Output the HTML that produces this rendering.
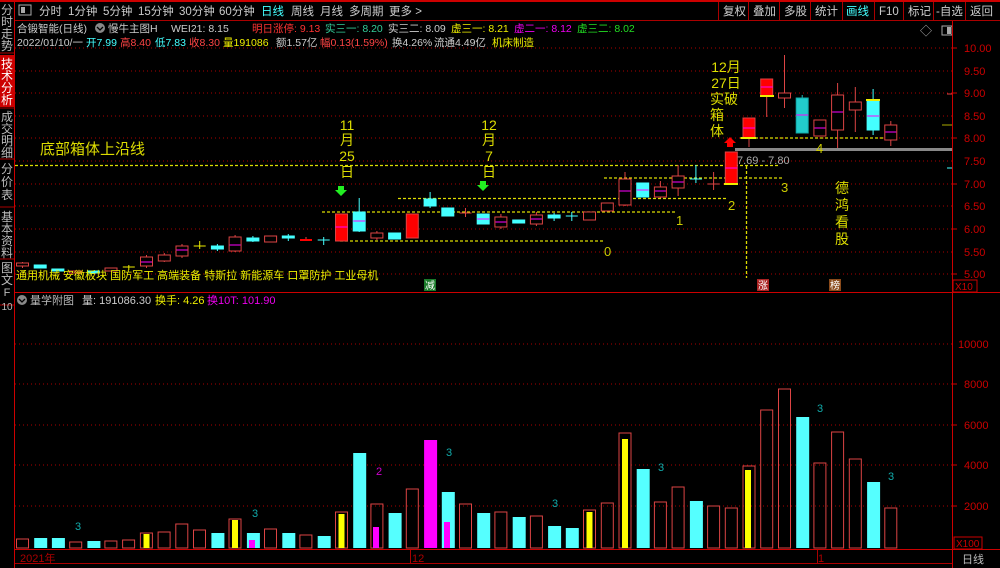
<!DOCTYPE html>
<html><head><meta charset="utf-8"><style>
html,body{margin:0;padding:0;background:#000;width:1000px;height:568px;overflow:hidden}
svg{display:block}
text{font-family:"Liberation Sans","Noto Sans CJK SC",sans-serif}
</style></head><body>
<svg width="1000" height="568" viewBox="0 0 1000 568" xmlns="http://www.w3.org/2000/svg">
<rect width="1000" height="568" fill="#000"/>
<rect x="0" y="0" width="1000" height="2" fill="#c00"/>
<line x1="15" y1="20.5" x2="1000" y2="20.5" stroke="#a00"/>
<rect x="19" y="5" width="12" height="10" fill="none" stroke="#aaa"/><rect x="21" y="7" width="4" height="6" fill="#aaa"/>
<g font-size="11.5" fill="#ccc">
<text x="39" y="15">分时</text><text x="68" y="15">1分钟</text><text x="103" y="15">5分钟</text><text x="138" y="15">15分钟</text><text x="179" y="15">30分钟</text><text x="219" y="15">60分钟</text><text x="261" y="15" fill="#4ff">日线</text><text x="291" y="15">周线</text><text x="320" y="15">月线</text><text x="349" y="15">多周期</text><text x="389" y="15">更多 &gt;</text>
<text x="723" y="15">复权</text><text x="753" y="15">叠加</text><text x="784" y="15">多股</text><text x="815" y="15">统计</text><text x="846" y="15" fill="#4ff">画线</text><text x="879" y="15">F10</text><text x="908" y="15">标记</text><text x="936" y="15">-自选</text><text x="970" y="15">返回</text>
</g>
<g stroke="#a00"><line x1="718.5" y1="2" x2="718.5" y2="20"/><line x1="748.5" y1="2" x2="748.5" y2="20"/><line x1="779.5" y1="2" x2="779.5" y2="20"/><line x1="810.5" y1="2" x2="810.5" y2="20"/><line x1="842.5" y1="2" x2="842.5" y2="20"/><line x1="874.5" y1="2" x2="874.5" y2="20"/><line x1="903.5" y1="2" x2="903.5" y2="20"/><line x1="933.5" y1="2" x2="933.5" y2="20"/><line x1="965.5" y1="2" x2="965.5" y2="20"/></g>
<rect x="0" y="2" width="14" height="566" fill="#000"/>
<line x1="14.5" y1="2" x2="14.5" y2="568" stroke="#c00"/>
<rect x="0" y="55" width="14" height="52" fill="#c00"/>
<g stroke="#a00"><line x1="0" y1="53" x2="14" y2="53"/><line x1="0" y1="108" x2="14" y2="108"/><line x1="0" y1="159" x2="14" y2="159"/><line x1="0" y1="207" x2="14" y2="207"/><line x1="0" y1="259" x2="14" y2="259"/><line x1="0" y1="305" x2="14" y2="305"/></g>
<g font-size="12" fill="#bbb" text-anchor="middle">
<text x="7" y="14">分</text><text x="7" y="26">时</text><text x="7" y="38">走</text><text x="7" y="50">势</text>
<text x="7" y="68" fill="#fff">技</text><text x="7" y="80" fill="#fff">术</text><text x="7" y="92" fill="#fff">分</text><text x="7" y="104" fill="#fff">析</text>
<text x="7" y="121">成</text><text x="7" y="133">交</text><text x="7" y="145">明</text><text x="7" y="157">细</text>
<text x="7" y="173">分</text><text x="7" y="186">价</text><text x="7" y="199">表</text>
<text x="7" y="221">基</text><text x="7" y="233">本</text><text x="7" y="245">资</text><text x="7" y="257">料</text>
<text x="7" y="272">图</text><text x="7" y="284">文</text><text x="7" y="296" font-size="11">F</text><text x="7" y="310" font-size="10">10</text>
</g>
<g font-size="10.5">
<text x="17" y="32" fill="#ccc">合锻智能(日线)</text>
<circle cx="100" cy="28" r="5" fill="#888"/><path d="M97,27 L100,30 L103,27" stroke="#000" fill="none" stroke-width="1.3"/>
<text x="108" y="32" fill="#ccc">慢牛主图H</text>
<text x="171" y="32" fill="#ccc">WEI21: 8.15</text>
<text x="252" y="32" fill="#f33">明日涨停: 9.13</text>
<text x="325" y="32" fill="#3c9">实三一: 8.20</text>
<text x="388" y="32" fill="#ccc">实三二: 8.09</text>
<text x="451" y="32" fill="#ee0">虚三一: 8.21</text>
<text x="514" y="32" fill="#e0e">虚二一: 8.12</text>
<text x="577" y="32" fill="#2d2">虚三二: 8.02</text>
<text x="17" y="46" fill="#ccc">2022/01/10/一</text>
<text x="86" y="46" fill="#4ff">开7.99</text>
<text x="120" y="46" fill="#f44">高8.40</text>
<text x="155" y="46" fill="#4ff">低7.83</text>
<text x="189" y="46" fill="#f44">收8.30</text>
<text x="223" y="46" fill="#ee0">量191086</text>
<text x="276" y="46" fill="#ccc">额1.57亿</text>
<text x="320" y="46" fill="#f44">幅0.13(1.59%)</text>
<text x="392" y="46" fill="#ccc">换4.26%</text>
<text x="434" y="46" fill="#ccc">流通4.49亿</text>
<text x="492" y="46" fill="#ee0">机床制造</text>
<text x="920" y="35" fill="#aaa" font-size="12">◇</text>
</g>
<rect x="942" y="26" width="10" height="9" fill="none" stroke="#aaa"/><rect x="947" y="27" width="4" height="7" fill="#aaa"/>
<line x1="952.5" y1="21" x2="952.5" y2="568" stroke="#c00"/>
<line x1="15" y1="292.5" x2="1000" y2="292.5" stroke="#c00"/>
<line x1="15" y1="549.5" x2="1000" y2="549.5" stroke="#c00"/>
<line x1="15" y1="563.5" x2="952" y2="563.5" stroke="#a00"/>
<g stroke="#a00" stroke-dasharray="1,3">
<line x1="15" y1="48" x2="952" y2="48"/><line x1="15" y1="71" x2="952" y2="71"/><line x1="15" y1="93" x2="952" y2="93"/><line x1="15" y1="116" x2="952" y2="116"/><line x1="15" y1="138" x2="952" y2="138"/><line x1="15" y1="161" x2="952" y2="161"/><line x1="15" y1="184" x2="952" y2="184"/><line x1="15" y1="206" x2="952" y2="206"/><line x1="15" y1="229" x2="952" y2="229"/><line x1="15" y1="252" x2="952" y2="252"/><line x1="15" y1="274" x2="952" y2="274"/>
<line x1="15" y1="344" x2="952" y2="344"/><line x1="15" y1="384" x2="952" y2="384"/><line x1="15" y1="425" x2="952" y2="425"/><line x1="15" y1="465" x2="952" y2="465"/><line x1="15" y1="506" x2="952" y2="506"/>
</g>
<g font-size="11" fill="#c00">
<text x="964" y="52">10.00</text><text x="964" y="75">9.50</text><text x="964" y="97">9.00</text><text x="964" y="120">8.50</text><text x="964" y="142">8.00</text><text x="964" y="165">7.50</text><text x="964" y="188">7.00</text><text x="964" y="210">6.50</text><text x="964" y="233">6.00</text><text x="964" y="256">5.50</text><text x="964" y="278">5.00</text>
<text x="958" y="348">10000</text><text x="964" y="388">8000</text><text x="964" y="429">6000</text><text x="964" y="469">4000</text><text x="964" y="510">2000</text>
</g>
<g stroke="#c00"><line x1="952" y1="48" x2="957" y2="48"/><line x1="952" y1="93" x2="957" y2="93"/><line x1="952" y1="138" x2="957" y2="138"/><line x1="952" y1="184" x2="957" y2="184"/><line x1="952" y1="229" x2="957" y2="229"/><line x1="952" y1="274" x2="957" y2="274"/><line x1="952" y1="384" x2="957" y2="384"/><line x1="952" y1="425" x2="957" y2="425"/><line x1="952" y1="465" x2="957" y2="465"/><line x1="952" y1="506" x2="957" y2="506"/></g>
<rect x="953" y="280" width="24" height="12" fill="none" stroke="#c00"/><text x="955" y="290" font-size="10" fill="#c00">X10</text>
<rect x="954" y="537" width="28" height="12" fill="none" stroke="#c00"/><text x="956" y="547" font-size="10" fill="#c00">X100</text>
<text x="962" y="563" font-size="11" fill="#bbb">日线</text>
<g font-size="11" fill="#a00"><text x="20" y="562">2021年</text><text x="412" y="562">12</text><text x="818" y="562">1</text></g>
<g stroke="#a00"><line x1="410.5" y1="550" x2="410.5" y2="564"/><line x1="817.5" y1="550" x2="817.5" y2="564"/></g>
<line x1="942" y1="125" x2="952" y2="125" stroke="#aa0"/><line x1="947" y1="168" x2="952" y2="168" stroke="#4ff"/><line x1="947" y1="94" x2="952" y2="94" stroke="#d44"/>
<g stroke="#dd0" stroke-dasharray="3,2" stroke-width="1.3">
<line x1="15" y1="165.5" x2="780" y2="165.5"/>
<line x1="322" y1="212" x2="676" y2="212"/>
<line x1="340" y1="241" x2="604" y2="241"/>
<line x1="398" y1="198.5" x2="728" y2="198.5"/>
<line x1="604" y1="178" x2="782" y2="178"/>
<line x1="740" y1="138" x2="887" y2="138"/>
<line x1="746.5" y1="166" x2="746.5" y2="278"/>
</g>
<rect x="735" y="148" width="217" height="3" fill="#888"/>
<text x="737" y="164" font-size="11" fill="#aaa">7.69 - 7.80</text>
<g font-size="13" fill="#cc0"><text x="604" y="256">0</text><text x="676" y="225">1</text><text x="728" y="210">2</text><text x="781" y="192">3</text><text x="816" y="153">4</text></g>
<text x="40" y="154" font-size="15" fill="#dd0">底部箱体上沿线</text>
<g font-size="14" fill="#dd0" text-anchor="middle">
<text x="347" y="130">11</text><text x="347" y="145">月</text><text x="347" y="161">25</text><text x="347" y="177">日</text>
<text x="489" y="130">12</text><text x="489" y="145">月</text><text x="489" y="161">7</text><text x="489" y="177">日</text>
<text x="726" y="72">12月</text><text x="726" y="88">27日</text><text x="724" y="104">实破</text><text x="717" y="120">箱</text><text x="717" y="136">体</text>
<text x="842" y="193">德</text><text x="842" y="210">鸿</text><text x="842" y="227">看</text><text x="842" y="244">股</text>
</g>
<path d="M338,186 h6 v4 h3 l-6,6 l-6,-6 h3z" fill="#2e2"/>
<path d="M480,181 h6 v4 h3 l-6,6 l-6,-6 h3z" fill="#2e2"/>
<path d="M727,147 h6 v-4 h3 l-6,-6 l-6,6 h3z" fill="#f00"/>
<g stroke="#d44" fill="#000">
<line x1="22.5" y1="262" x2="22.5" y2="268"/><rect x="16.5" y="263" width="12" height="3"/>
<rect x="69.5" y="271" width="12" height="2"/>
<rect x="105" y="268" width="12" height="3"/>
<line x1="146.5" y1="255" x2="146.5" y2="268"/><rect x="140.5" y="257" width="12" height="9"/>
<line x1="164.3" y1="253" x2="164.3" y2="262"/><rect x="158.3" y="255" width="12" height="6"/>
<line x1="182" y1="244" x2="182" y2="258"/><rect x="176" y="246" width="12" height="10"/>
<line x1="235.1" y1="235" x2="235.1" y2="252"/><rect x="229.1" y="237" width="12" height="14"/>
<rect x="264.6" y="236" width="12" height="6"/>
<line x1="306" y1="237" x2="306" y2="241"/>
<line x1="376.9" y1="231" x2="376.9" y2="240"/><rect x="370.9" y="233" width="12" height="5"/>
<line x1="465.5" y1="208" x2="465.5" y2="217"/><line x1="459.5" y1="213" x2="471.5" y2="213"/>
<line x1="500.9" y1="214" x2="500.9" y2="229"/><rect x="494.9" y="217" width="12" height="10"/>
<line x1="536.4" y1="212" x2="536.4" y2="226"/><rect x="530.4" y="215" width="12" height="9"/>
<rect x="583.5" y="212" width="12" height="8"/>
<rect x="601.3" y="203" width="12" height="8"/>
<line x1="625" y1="172" x2="625" y2="206"/><rect x="619" y="179" width="12" height="26"/>
<line x1="660.4" y1="181" x2="660.4" y2="198"/><rect x="654.4" y="187" width="12" height="10"/>
<line x1="678.1" y1="165" x2="678.1" y2="196"/><rect x="672.1" y="176" width="12" height="12"/>
<line x1="713.6" y1="172" x2="713.6" y2="190"/><line x1="707.6" y1="184" x2="719.6" y2="184"/>
<line x1="749" y1="138" x2="749" y2="147"/>
<line x1="766.7" y1="96" x2="766.7" y2="117"/>
<line x1="784.5" y1="55" x2="784.5" y2="108"/><rect x="778.5" y="93" width="12" height="5"/>
<rect x="813.9" y="120" width="12" height="16"/>
<line x1="837.6" y1="83" x2="837.6" y2="148"/><rect x="831.6" y="95" width="12" height="35"/>
<line x1="855.3" y1="87" x2="855.3" y2="132"/><rect x="849.3" y="102" width="12" height="8"/>
<line x1="890.8" y1="121" x2="890.8" y2="146"/><rect x="884.8" y="125" width="12" height="15"/>
</g>
<g fill="#f00"><rect x="300" y="239" width="12" height="2"/><rect x="335.5" y="214" width="12" height="27" stroke="#d44"/><rect x="406.3" y="214" width="12" height="24" stroke="#d44"/><rect x="725.3" y="152" width="12" height="32" stroke="#d44"/><rect x="743" y="118" width="12" height="20" stroke="#d44"/><rect x="760.7" y="79" width="12" height="17" stroke="#d44"/></g>
<g stroke="#4ff" fill="#4ff">
<rect x="34.2" y="265" width="12" height="3"/><rect x="51.9" y="269" width="12" height="2"/><rect x="87.4" y="271" width="12" height="2"/>
<line x1="217.4" y1="244" x2="217.4" y2="251"/><rect x="211.4" y="246" width="12" height="3"/>
<line x1="252.9" y1="236" x2="252.9" y2="242"/><rect x="246.9" y="238" width="12" height="3"/>
<line x1="288.3" y1="234" x2="288.3" y2="241"/><rect x="282.3" y="236" width="12" height="2"/>
<line x1="323.7" y1="237" x2="323.7" y2="245"/><line x1="317.7" y1="240" x2="329.7" y2="240"/>
<line x1="359.2" y1="198" x2="359.2" y2="232"/><rect x="353.2" y="212" width="12" height="19"/>
<rect x="388.6" y="233" width="12" height="6"/>
<line x1="430.1" y1="192" x2="430.1" y2="208"/><rect x="424.1" y="199" width="12" height="7"/>
<rect x="441.8" y="208" width="12" height="8"/>
<rect x="477.2" y="214" width="12" height="10"/>
<rect x="512.7" y="220" width="12" height="3"/>
<line x1="554.1" y1="213" x2="554.1" y2="221"/><rect x="548.1" y="215" width="12" height="3"/>
<line x1="571.8" y1="212" x2="571.8" y2="221"/><line x1="565.8" y1="216" x2="577.8" y2="216"/>
<rect x="636.7" y="183" width="12" height="14"/>
<line x1="695.9" y1="165" x2="695.9" y2="183"/><line x1="689.9" y1="179" x2="701.9" y2="179"/>
<line x1="873.1" y1="89" x2="873.1" y2="135"/><rect x="867.1" y="100" width="12" height="30"/>
</g>
<line x1="802.2" y1="95" x2="802.2" y2="133" stroke="#2bb"/><rect x="796.2" y="98" width="12" height="35" fill="#2cc" stroke="#1aa"/>
<line x1="122.8" y1="267" x2="134.8" y2="267" stroke="#ee0"/><line x1="128.8" y1="265" x2="128.8" y2="270" stroke="#ee0"/>
<line x1="193.7" y1="246" x2="205.7" y2="246" stroke="#ee0"/><line x1="199.7" y1="241" x2="199.7" y2="249" stroke="#ee0"/>
<g stroke="#ee0" stroke-width="2"><line x1="724" y1="184" x2="738" y2="184"/><line x1="760" y1="96" x2="774" y2="96"/><line x1="866" y1="100" x2="880" y2="100"/><line x1="741" y1="138" x2="756" y2="138"/></g>
<g stroke="#f0f"><line x1="141" y1="262" x2="152" y2="262"/><line x1="176.5" y1="250" x2="187.5" y2="250"/><line x1="229.6" y1="245" x2="240.6" y2="245"/><line x1="335.5" y1="227" x2="347.5" y2="227"/><line x1="353.2" y1="221" x2="365.2" y2="221"/><line x1="477.2" y1="219" x2="489.2" y2="219"/><line x1="495.4" y1="222" x2="506.4" y2="222"/><line x1="530.9" y1="219" x2="541.9" y2="219"/><line x1="619.5" y1="191" x2="630.5" y2="191"/><line x1="636.7" y1="190" x2="648.7" y2="190"/><line x1="654.9" y1="191" x2="665.9" y2="191"/><line x1="672.6" y1="182" x2="683.6" y2="182"/><line x1="725.3" y1="168" x2="737.3" y2="168"/><line x1="743" y1="128" x2="755" y2="128"/><line x1="760.7" y1="87" x2="772.7" y2="87"/><line x1="796.2" y1="115" x2="808.2" y2="115"/><line x1="814.4" y1="128" x2="825.4" y2="128"/><line x1="832.1" y1="112" x2="843.1" y2="112"/><line x1="867.1" y1="116" x2="879.1" y2="116"/><line x1="885.3" y1="132" x2="896.3" y2="132"/></g>
<text x="16" y="279" font-size="11" fill="#ee0">通用机械 安徽板块 国防军工 高端装备 特斯拉 新能源车 口罩防护 工业母机</text>
<rect x="424" y="279" width="12" height="12" fill="#1a7a2a"/><text x="425" y="289" font-size="10" fill="#fff">减</text>
<rect x="757" y="279" width="12" height="12" fill="#a22"/><text x="758" y="289" font-size="10" fill="#fff">涨</text>
<rect x="829" y="279" width="12" height="12" fill="#8a4a1a"/><text x="830" y="289" font-size="10" fill="#fff">榜</text>
<circle cx="22" cy="300" r="5" fill="#888"/><path d="M19,299 L22,302 L25,299" stroke="#000" fill="none" stroke-width="1.3"/>
<g font-size="11"><text x="30" y="304" fill="#bbb">量学附图</text><text x="82" y="304" fill="#ccc">量: 191086.30</text><text x="155" y="304" fill="#ee0">换手: 4.26</text><text x="207" y="304" fill="#e0e">换10T: 101.90</text></g>
<g stroke="#d44" fill="none">
<rect x="16.5" y="539" width="12" height="9"/><rect x="69.7" y="542" width="12" height="6"/><rect x="104.9" y="541" width="12" height="7"/><rect x="122.6" y="540" width="12" height="8"/><rect x="140.4" y="533" width="12" height="15"/><rect x="158.1" y="532" width="12" height="16"/><rect x="175.8" y="524" width="12" height="24"/><rect x="193.5" y="530" width="12" height="18"/><rect x="229" y="519" width="12" height="29"/><rect x="264.5" y="529" width="12" height="19"/><rect x="299.9" y="535" width="12" height="13"/><rect x="335.5" y="512" width="12" height="36"/><rect x="370.9" y="504" width="12" height="44"/><rect x="406.3" y="489" width="12" height="59"/><rect x="459.5" y="504" width="12" height="44"/><rect x="494.9" y="512" width="12" height="36"/><rect x="530.4" y="516" width="12" height="32"/><rect x="583.5" y="510" width="12" height="38"/><rect x="601.3" y="503" width="12" height="45"/><rect x="619" y="433" width="12" height="115"/><rect x="654.4" y="502" width="12" height="46"/><rect x="672.1" y="487" width="12" height="61"/><rect x="707.6" y="506" width="12" height="42"/><rect x="725.3" y="508" width="12" height="40"/><rect x="743" y="466" width="12" height="82"/><rect x="760.7" y="410" width="12" height="138"/><rect x="778.5" y="389" width="12" height="159"/><rect x="813.9" y="463" width="12" height="85"/><rect x="831.6" y="432" width="12" height="116"/><rect x="849.3" y="459" width="12" height="89"/><rect x="884.8" y="508" width="12" height="40"/>
</g>
<g fill="#5ff">
<rect x="34.2" y="538" width="13" height="10"/><rect x="51.9" y="538" width="13" height="10"/><rect x="87.4" y="541" width="13" height="7"/><rect x="211.4" y="533" width="13" height="15"/><rect x="246.9" y="533" width="13" height="15"/><rect x="282.3" y="533" width="13" height="15"/><rect x="317.7" y="536" width="13" height="12"/><rect x="353.2" y="453" width="13" height="95"/><rect x="388.6" y="513" width="13" height="35"/><rect x="441.8" y="492" width="13" height="56"/><rect x="477.2" y="513" width="13" height="35"/><rect x="512.7" y="517" width="13" height="31"/><rect x="548.1" y="526" width="13" height="22"/><rect x="565.8" y="528" width="13" height="20"/><rect x="636.7" y="469" width="13" height="79"/><rect x="689.9" y="501" width="13" height="47"/><rect x="796.2" y="417" width="13" height="131"/><rect x="867.1" y="482" width="13" height="66"/>
</g>
<rect x="424.1" y="440" width="13" height="108" fill="#f0f"/>
<g fill="#f0f"><rect x="249" y="540" width="6" height="8"/><rect x="373" y="527" width="6" height="21"/><rect x="444" y="522" width="6" height="26"/></g>
<g fill="#ff0"><rect x="143.5" y="534" width="6" height="14"/><rect x="232" y="520" width="6" height="28"/><rect x="338.5" y="514" width="6" height="34"/><rect x="586.5" y="512" width="6" height="36"/><rect x="622" y="439" width="6" height="109"/><rect x="745" y="470" width="6" height="78"/></g>
<g font-size="11" fill="#1aa"><text x="75" y="530">3</text><text x="252" y="517">3</text><text x="446" y="456">3</text><text x="552" y="507">3</text><text x="658" y="471">3</text><text x="817" y="412">3</text><text x="888" y="480">3</text></g>
<text x="376" y="475" font-size="11" fill="#c0c">2</text>
</svg>
</body></html>
